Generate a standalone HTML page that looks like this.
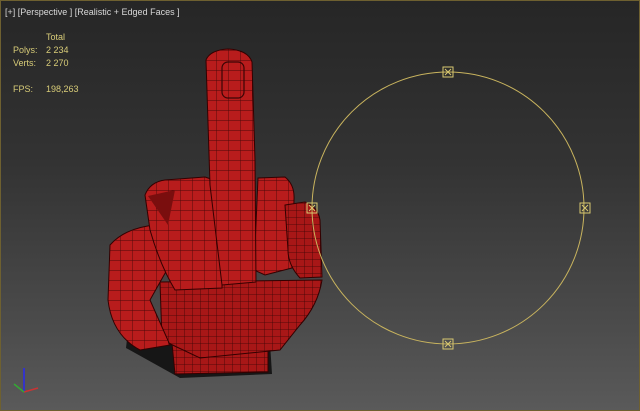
<!DOCTYPE html>
<html><head><meta charset="utf-8"><style>
html,body{margin:0;padding:0}
body{width:640px;height:411px;overflow:hidden;position:relative;background:linear-gradient(#262626 0%,#333333 40%,#4c4c4c 80%,#5a5a5a 100%);font-family:"Liberation Sans",sans-serif}
.frame{position:absolute;left:0;top:0;width:638px;height:409px;border:1px solid #6e6030}
.t{position:absolute;color:#d8d8d8;font-size:9px;white-space:nowrap}
.y{color:#d8cc78}
</style></head><body>
<svg width="640" height="411" style="position:absolute;left:0;top:0">
<defs>
<pattern id="m" width="12" height="10" patternUnits="userSpaceOnUse">
<rect width="12" height="10" fill="#b81c1c"/>
<path d="M0 0H12M0 0V10" stroke="#4a0808" stroke-width="0.9"/>
</pattern>
<pattern id="m2" width="8" height="7" patternUnits="userSpaceOnUse">
<rect width="8" height="7" fill="#a81717"/>
<path d="M0 0H8M0 0V7" stroke="#3a0505" stroke-width="0.8"/>
</pattern>
</defs>
<polygon points="128,330 175,345 270,343 272,374 180,378 126,348" fill="#161616"/>
<polygon points="172,343 268,343 268,372 175,374" fill="url(#m2)" stroke="#300"/>
<path d="M160,282 L322,280 Q318,305 300,325 L280,350 L200,358 L162,340 Z" fill="url(#m2)" stroke="#300"/>
<path d="M110,245 Q125,228 155,225 Q172,232 168,268 L150,300 L170,345 L140,350 Q112,335 108,300 Z" fill="url(#m)" stroke="#300"/>
<path d="M145,195 Q150,182 165,180 L205,177 Q222,182 222,195 L222,288 L175,290 Q160,265 150,230 Z" fill="url(#m)" stroke="#300"/>
<polygon points="148,196 175,190 168,225" fill="#7a0e0e"/>
<path d="M258,178 L285,177 Q295,185 294,200 L292,268 L265,275 L254,270 Z" fill="url(#m)" stroke="#300"/>
<path d="M285,205 L305,202 Q318,207 320,220 L322,277 L300,278 Q288,265 288,250 Z" fill="url(#m2)" stroke="#300"/>
<path d="M206,60 Q210,50 228,49 Q248,50 252,62 L255,160 L256,282 L222,285 L210,185 Z" fill="url(#m)" stroke="#300"/>
<rect x="222" y="62" width="22" height="36" rx="6" fill="none" stroke="#3a0505" stroke-width="1.2"/>
<circle cx="448" cy="208" r="136" fill="none" stroke="#c9b45e" stroke-width="1"/>
<g fill="none" stroke="#d8c870" stroke-width="1">
<rect x="443" y="67" width="10" height="10"/><path d="M445,69l6,6M451,69l-6,6"/>
<rect x="443" y="339" width="10" height="10"/><path d="M445,341l6,6M451,341l-6,6"/>
<rect x="580" y="203" width="10" height="10"/><path d="M582,205l6,6M588,205l-6,6"/>
<rect x="307" y="203" width="10" height="10"/><path d="M309,205l6,6M315,205l-6,6"/>
</g>
<path d="M24,392V368" stroke="#3434c8" stroke-width="2"/>
<path d="M24,392l14,-4" stroke="#c83434" stroke-width="1.5"/>
<path d="M24,392l-10,-8" stroke="#34a834" stroke-width="1.5"/>
</svg>
<div class="frame"></div>
<div class="t" style="left:5px;top:7px">[+] [Perspective ] [Realistic + Edged Faces ]</div>
<div class="t y" style="left:46px;top:32px">Total</div>
<div class="t y" style="left:13px;top:45px">Polys:</div><div class="t y" style="left:46px;top:45px">2 234</div>
<div class="t y" style="left:13px;top:58px">Verts:</div><div class="t y" style="left:46px;top:58px">2 270</div>
<div class="t y" style="left:13px;top:84px">FPS:</div><div class="t y" style="left:46px;top:84px">198,263</div>
</body></html>
